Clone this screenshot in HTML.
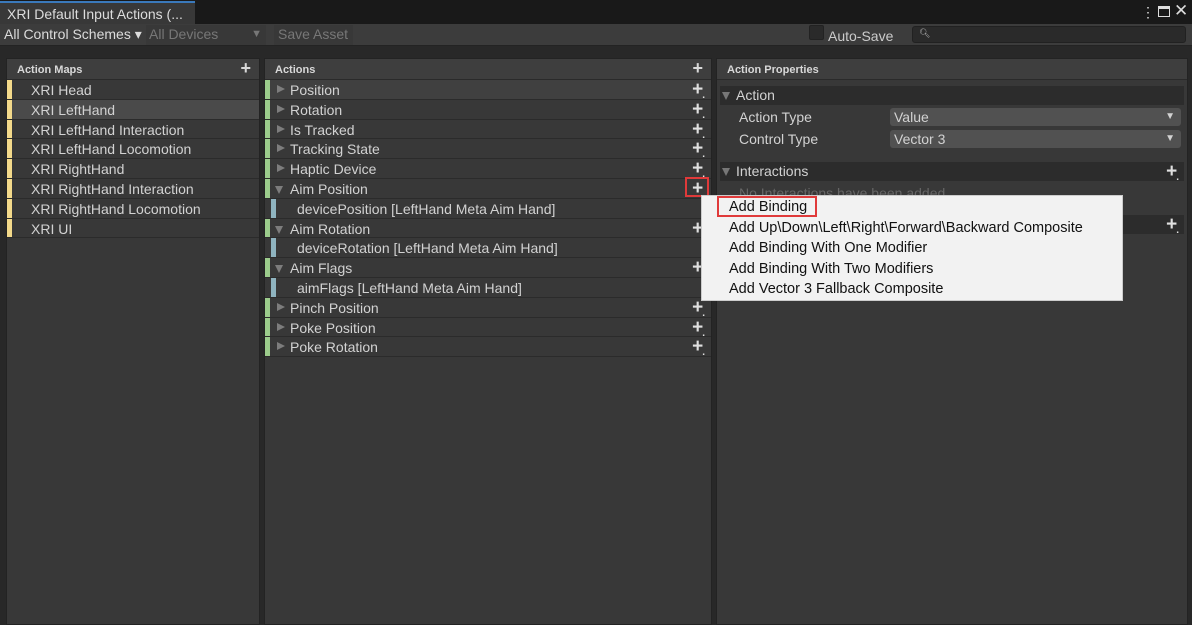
<!DOCTYPE html>
<html><head><meta charset="utf-8"><style>
*{margin:0;padding:0;box-sizing:border-box}
body{width:1192px;height:625px;background:#282828;font-family:"Liberation Sans",sans-serif;color:#d2d2d2;font-size:14px;position:relative;overflow:hidden}
.a{position:absolute}
.panel{position:absolute;top:58px;bottom:0;background:#383838;border:1px solid #232323}
.ph{height:21px;background:#3e3e3e;font-weight:bold;font-size:11px;padding:5px 0 0 10px;color:#d8d8d8;border-bottom:1px solid #2a2a2a;position:relative}
.row{position:relative;height:19.8px;border-bottom:1px solid #2b2b2b;line-height:20px;white-space:nowrap}
.bar{position:absolute;left:0;top:0;bottom:0;width:5px}
.y{background:#f3d98a}.g{background:#9ccc8c}.b{background:#8fb4c0}
.tri{position:absolute;left:12px;top:5px;width:0;height:0;border-left:8px solid #7d7d7d;border-top:4.5px solid transparent;border-bottom:4.5px solid transparent}
.trid{position:absolute;left:10px;top:7px;width:0;height:0;border-top:8px solid #7d7d7d;border-left:4.5px solid transparent;border-right:4.5px solid transparent}
.plus{position:absolute;right:5px;top:0;font-size:19px;font-weight:bold;color:#e0e0e0;line-height:19px}
.plus small{font-size:10px;position:relative;top:3px;left:-1px}
.menu div{height:20.6px;line-height:20px;padding-left:27px;font-size:14.5px;color:#111}
</style></head><body>
<div class="a" style="left:0;top:0;width:1192px;height:24px;background:#191919"></div>
<div class="a" style="left:0;top:1px;width:195px;height:23px;background:#383838;border-top:2px solid #3a79bb;padding:3px 0 0 7px;font-size:14px;color:#dcdcdc">XRI Default Input Actions (...</div>
<div class="a" style="left:1141px;top:4px;font-size:14px;color:#ddd">⋮</div>
<div class="a" style="left:1158px;top:6px;width:12px;height:11px;border:1.5px solid #ddd;border-top-width:3px"></div>
<div class="a" style="left:1174px;top:1px;font-size:17px;color:#ddd">✕</div>
<div class="a" style="left:0;top:24px;width:1192px;height:22px;background:#3c3c3c;border-bottom:1px solid #232323"></div>
<div class="a" style="left:4px;top:26px;font-size:14px;color:#dcdcdc">All Control Schemes ▾</div>
<div class="a" style="left:146px;top:25px;width:120px;height:20px;background:#383838;padding:1px 0 0 3px;font-size:14px;color:#777">All Devices<span style="position:absolute;right:4px;font-size:11px;top:3px">▼</span></div>
<div class="a" style="left:274px;top:25px;width:79px;height:20px;background:#383838;padding:1px 0 0 4px;font-size:14px;color:#777">Save Asset</div>
<div class="a" style="left:809px;top:25px;width:15px;height:15px;background:#2a2a2a;border:1px solid #222;border-radius:2px"></div>
<div class="a" style="left:828px;top:28px;font-size:14px;color:#ccc">Auto-Save</div>
<div class="a" style="left:912px;top:26px;width:274px;height:17px;background:#2a2a2a;border:1px solid #212121;border-radius:3px;font-size:9px;padding:1px 0 0 6px;color:#bbb">🔍︎</div>

<div class="panel" style="left:6px;width:254px">
<div class="ph">Action Maps<span style="position:absolute;right:8px;top:-1px;font-size:18px">+</span></div>
<div class="row"><div class="bar y"></div><span style="padding-left:24px">XRI Head</span></div>
<div class="row" style="background:#4a4a4a"><div class="bar y"></div><span style="padding-left:24px">XRI LeftHand</span></div>
<div class="row"><div class="bar y"></div><span style="padding-left:24px">XRI LeftHand Interaction</span></div>
<div class="row"><div class="bar y"></div><span style="padding-left:24px">XRI LeftHand Locomotion</span></div>
<div class="row"><div class="bar y"></div><span style="padding-left:24px">XRI RightHand</span></div>
<div class="row"><div class="bar y"></div><span style="padding-left:24px">XRI RightHand Interaction</span></div>
<div class="row"><div class="bar y"></div><span style="padding-left:24px">XRI RightHand Locomotion</span></div>
<div class="row"><div class="bar y"></div><span style="padding-left:24px">XRI UI</span></div>
</div>

<div class="panel" style="left:264px;width:448px">
<div class="ph">Actions<span style="position:absolute;right:8px;top:-1px;font-size:18px">+</span></div>
<div class="row" style="background:#404040"><div class="bar g"></div><div class="tri"></div><span style="padding-left:25px">Position</span><span class="plus">+<small>.</small></span></div>
<div class="row"><div class="bar g"></div><div class="tri"></div><span style="padding-left:25px">Rotation</span><span class="plus">+<small>.</small></span></div>
<div class="row"><div class="bar g"></div><div class="tri"></div><span style="padding-left:25px">Is Tracked</span><span class="plus">+<small>.</small></span></div>
<div class="row"><div class="bar g"></div><div class="tri"></div><span style="padding-left:25px">Tracking State</span><span class="plus">+<small>.</small></span></div>
<div class="row"><div class="bar g"></div><div class="tri"></div><span style="padding-left:25px">Haptic Device</span><span class="plus">+<small>.</small></span></div>
<div class="row"><div class="bar g"></div><div class="trid"></div><span style="padding-left:25px">Aim Position</span><span class="plus">+<small>.</small></span><div class="a" style="right:2px;top:-2px;width:24px;height:20px;border:2px solid #e03a3a"></div></div>
<div class="row"><div class="bar b" style="left:6px"></div><span style="padding-left:32px">devicePosition [LeftHand Meta Aim Hand]</span></div>
<div class="row"><div class="bar g"></div><div class="trid"></div><span style="padding-left:25px">Aim Rotation</span><span class="plus">+<small>.</small></span></div>
<div class="row"><div class="bar b" style="left:6px"></div><span style="padding-left:32px">deviceRotation [LeftHand Meta Aim Hand]</span></div>
<div class="row"><div class="bar g"></div><div class="trid"></div><span style="padding-left:25px">Aim Flags</span><span class="plus">+<small>.</small></span></div>
<div class="row"><div class="bar b" style="left:6px"></div><span style="padding-left:32px">aimFlags [LeftHand Meta Aim Hand]</span></div>
<div class="row"><div class="bar g"></div><div class="tri"></div><span style="padding-left:25px">Pinch Position</span><span class="plus">+<small>.</small></span></div>
<div class="row"><div class="bar g"></div><div class="tri"></div><span style="padding-left:25px">Poke Position</span><span class="plus">+<small>.</small></span></div>
<div class="row"><div class="bar g"></div><div class="tri"></div><span style="padding-left:25px">Poke Rotation</span><span class="plus">+<small>.</small></span></div>
</div>

<div class="panel" style="left:716px;width:472px">
<div class="ph">Action Properties</div>
<div class="a" style="left:3px;top:27px;width:464px;height:19px;background:#2c2c2c;font-size:14px;line-height:19px;padding-left:16px">Action</div>
<div class="a" style="left:5px;top:33px;width:0;height:0;border-top:8px solid #777;border-left:4.5px solid transparent;border-right:4.5px solid transparent"></div>
<div class="a" style="left:22px;top:50px;font-size:14px">Action Type</div>
<div class="a" style="left:22px;top:72px;font-size:14px">Control Type</div>
<div class="a" style="left:173px;top:49px;width:291px;height:18px;background:#515151;border-radius:3px;padding:0 4px;font-size:14px;line-height:18px">Value<span style="position:absolute;right:6px;font-size:10px">▼</span></div>
<div class="a" style="left:173px;top:71px;width:291px;height:18px;background:#515151;border-radius:3px;padding:0 4px;font-size:14px;line-height:18px">Vector 3<span style="position:absolute;right:6px;font-size:10px">▼</span></div>
<div class="a" style="left:3px;top:103px;width:464px;height:19px;background:#2c2c2c;font-size:14px;line-height:19px;padding-left:16px">Interactions<span class="plus" style="right:4px">+<small>.</small></span></div>
<div class="a" style="left:5px;top:109px;width:0;height:0;border-top:8px solid #777;border-left:4.5px solid transparent;border-right:4.5px solid transparent"></div>
<div class="a" style="left:22px;top:126px;font-size:14px;color:#666">No Interactions have been added</div>
<div class="a" style="left:3px;top:156px;width:464px;height:19px;background:#2c2c2c"><span class="plus" style="right:4px">+<small>.</small></span></div>
</div>

<div class="a menu" style="left:701px;top:195px;width:422px;height:106px;background:#f2f2f2;border:1px solid #ccc;padding-top:1px">
<div>Add Binding</div>
<div>Add Up\Down\Left\Right\Forward\Backward Composite</div>
<div>Add Binding With One Modifier</div>
<div>Add Binding With Two Modifiers</div>
<div>Add Vector 3 Fallback Composite</div>
</div>
<div class="a" style="left:717px;top:196px;width:100px;height:21px;border:2px solid #e03a3a"></div>
</body></html>
